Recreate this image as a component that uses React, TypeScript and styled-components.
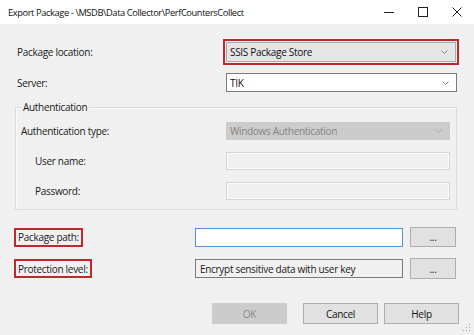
import styled, { createGlobalStyle } from 'styled-components'

const GlobalStyle = createGlobalStyle`
  html, body {
    margin: 0;
    padding: 0;
    background: #f0f0f0;
  }
  * {
    box-sizing: border-box;
  }
`;

const Window = styled.div`
  width: 474px;
  height: 335px;
  background: #f0f0f0;
  font-family: "Open Sans", "Noto Sans", sans-serif;
  font-size: 10px;
  letter-spacing: -0.3px;
  color: #1a1a1a;
  position: relative;
  overflow: hidden;
`;

const TitleBar = styled.div`
  height: 24px;
  background: #ffffff;
  display: flex;
  align-items: center;
  padding-left: 8px;
`;

const Title = styled.div`
  flex: 1;
  font-size: 9.3px;
  letter-spacing: -0.4px;
  color: #111;
`;

const WinButtons = styled.div`
  display: flex;
  height: 24px;
  align-items: center;
`;

const WinButton = styled.div`
  width: 34px;
  height: 24px;
  display: flex;
  align-items: center;
  justify-content: center;
`;

const Body = styled.div`
  padding-top: 15px;
`;

const TopRow = styled.div<{ $mt?: number }>`
  display: grid;
  grid-template-columns: 206px 234px;
  align-items: center;
  padding-left: 17px;
  margin-top: ${p => p.$mt ?? 0}px;
`;

const Label = styled.span<{ $indent?: number }>`
  padding-left: ${p => p.$indent ?? 0}px;
  white-space: nowrap;
`;

const Highlight = styled.div`
  border: 2px solid #c1272d;
  padding: 1px;
  width: 236px;
`;

const Combo = styled.div<{ $variant?: 'gray' | 'white' | 'disabled' }>`
  height: ${p => (p.$variant === 'white' ? 19 : 20)}px;
  display: flex;
  align-items: center;
  justify-content: space-between;
  padding: 0 7px 0 3px;
  background: ${p =>
    p.$variant === 'white' ? '#ffffff' : p.$variant === 'disabled' ? '#cccccc' : '#e5e5e5'};
  border: 1px solid ${p =>
    p.$variant === 'white' ? '#7a7a7a' : p.$variant === 'disabled' ? '#cccccc' : '#acacac'};
  color: ${p => (p.$variant === 'disabled' ? '#858585' : '#111')};
`;

const Group = styled.div`
  position: relative;
  margin: 15px 0 0 15px;
  width: 442px;
  border: 1px solid #dcdcdc;
  box-shadow: inset 1px 1px 0 #fafafa;
  padding: 14px 0 9px 0;
  display: grid;
  grid-template-columns: 210px 224px;
  align-items: center;
  row-gap: 12px;
`;

const Legend = styled.span`
  position: absolute;
  top: -8px;
  left: 5px;
  padding: 0 2px;
  background: #f0f0f0;
`;

const TextBox = styled.div<{ $disabled?: boolean; $focused?: boolean; $gray?: boolean }>`
  height: ${p => (p.$gray || p.$focused ? 19 : 18)}px;
  display: flex;
  align-items: center;
  padding-left: 4px;
  background: ${p => (p.$disabled ? '#f0f0f0' : p.$gray ? '#f0f0f0' : '#ffffff')};
  border: 1px solid
    ${p => (p.$disabled ? '#d6d6d6' : p.$focused ? '#4f93d4' : '#7a7a7a')};
  box-shadow: ${p => (p.$disabled ? 'inset 0 0 0 1px #fafafa' : 'none')};
`;

const PathGrid = styled.div`
  display: grid;
  grid-template-columns: 174px 208px 46px;
  column-gap: 7px;
  row-gap: 11px;
  align-items: center;
  margin-top: 17px;
  padding-left: 14px;
`;

const BoxedLabel = styled.span`
  justify-self: start;
  border: 2px solid #c1272d;
  padding: 0 2px;
  height: 19px;
  display: flex;
  align-items: center;
`;

const Button = styled.div<{ $w?: number; $h?: number; $disabled?: boolean }>`
  width: ${p => p.$w ?? 75}px;
  height: ${p => p.$h ?? 21}px;
  display: flex;
  align-items: center;
  justify-content: center;
  background: ${p => (p.$disabled ? '#cccccc' : '#e1e1e1')};
  border: 1px solid ${p => (p.$disabled ? '#cccccc' : '#adadad')};
  color: ${p => (p.$disabled ? '#8a8a8a' : '#111')};
`;

const Footer = styled.div`
  display: flex;
  margin-top: 24px;
  padding-left: 212px;
`;

const Spacer = styled.div<{ $w: number }>`
  width: ${p => p.$w}px;
`;

const Grip = styled.svg`
  position: absolute;
  right: 3px;
  bottom: 3px;
`;

const Chevron = ({ color = '#8a8a8a' }: { color?: string }) => (
  <svg width="7" height="4" viewBox="0 0 7 4">
    <polyline points="0.5,0.5 3.5,3.5 6.5,0.5" fill="none" stroke={color} strokeWidth="1" />
  </svg>
);

export default function App() {
  return (
    <>
      <GlobalStyle />
      <Window>
        <TitleBar>
          <Title>Export Package - \MSDB\Data Collector\PerfCountersCollect</Title>
          <WinButtons>
            <WinButton>
              <svg width="10" height="10" viewBox="0 0 10 10">
                <line x1="0" y1="5.5" x2="10" y2="5.5" stroke="#222" strokeWidth="1" />
              </svg>
            </WinButton>
            <WinButton>
              <svg width="10" height="10" viewBox="0 0 10 10">
                <rect x="0.5" y="0.5" width="9" height="9" fill="none" stroke="#222" strokeWidth="1" />
              </svg>
            </WinButton>
            <WinButton>
              <svg width="10" height="10" viewBox="0 0 10 10">
                <path d="M0.5 0.5 L9.5 9.5 M9.5 0.5 L0.5 9.5" stroke="#222" strokeWidth="1" />
              </svg>
            </WinButton>
          </WinButtons>
        </TitleBar>

        <Body>
          <TopRow>
            <Label>Package location:</Label>
            <Highlight>
              <Combo $variant="gray">
                <span>SSIS Package Store</span>
                <Chevron />
              </Combo>
            </Highlight>
          </TopRow>
          <TopRow $mt={8}>
            <Label>Server:</Label>
            <Combo $variant="white" style={{ width: 231, marginLeft: 3 }}>
              <span>TIK</span>
              <Chevron />
            </Combo>
          </TopRow>

          <Group>
            <Legend>Authentication</Legend>
            <Label $indent={5}>Authentication type:</Label>
            <Combo $variant="disabled" style={{ height: 18 }}>
              <span>Windows Authentication</span>
              <Chevron color="#a8a8a8" />
            </Combo>
            <Label $indent={19}>User name:</Label>
            <TextBox $disabled />
            <Label $indent={19}>Password:</Label>
            <TextBox $disabled />
          </Group>

          <PathGrid>
            <BoxedLabel>Package path:</BoxedLabel>
            <TextBox $focused />
            <Button $w={46} $h={20}>...</Button>
            <BoxedLabel>Protection level:</BoxedLabel>
            <TextBox $gray>Encrypt sensitive data with user key</TextBox>
            <Button $w={46} $h={21}>...</Button>
          </PathGrid>

          <Footer>
            <Button $disabled>OK</Button>
            <Spacer $w={16} />
            <Button>Cancel</Button>
            <Spacer $w={6} />
            <Button>Help</Button>
          </Footer>
        </Body>

        <Grip width="8" height="8" viewBox="0 0 8 8">
          <rect x="6" y="0" width="1" height="1" fill="#a0a0a0" />
          <rect x="3" y="3" width="1" height="1" fill="#a0a0a0" />
          <rect x="6" y="3" width="1" height="1" fill="#a0a0a0" />
          <rect x="0" y="6" width="1" height="1" fill="#a0a0a0" />
          <rect x="3" y="6" width="1" height="1" fill="#a0a0a0" />
          <rect x="6" y="6" width="1" height="1" fill="#a0a0a0" />
        </Grip>
      </Window>
    </>
  );
}
